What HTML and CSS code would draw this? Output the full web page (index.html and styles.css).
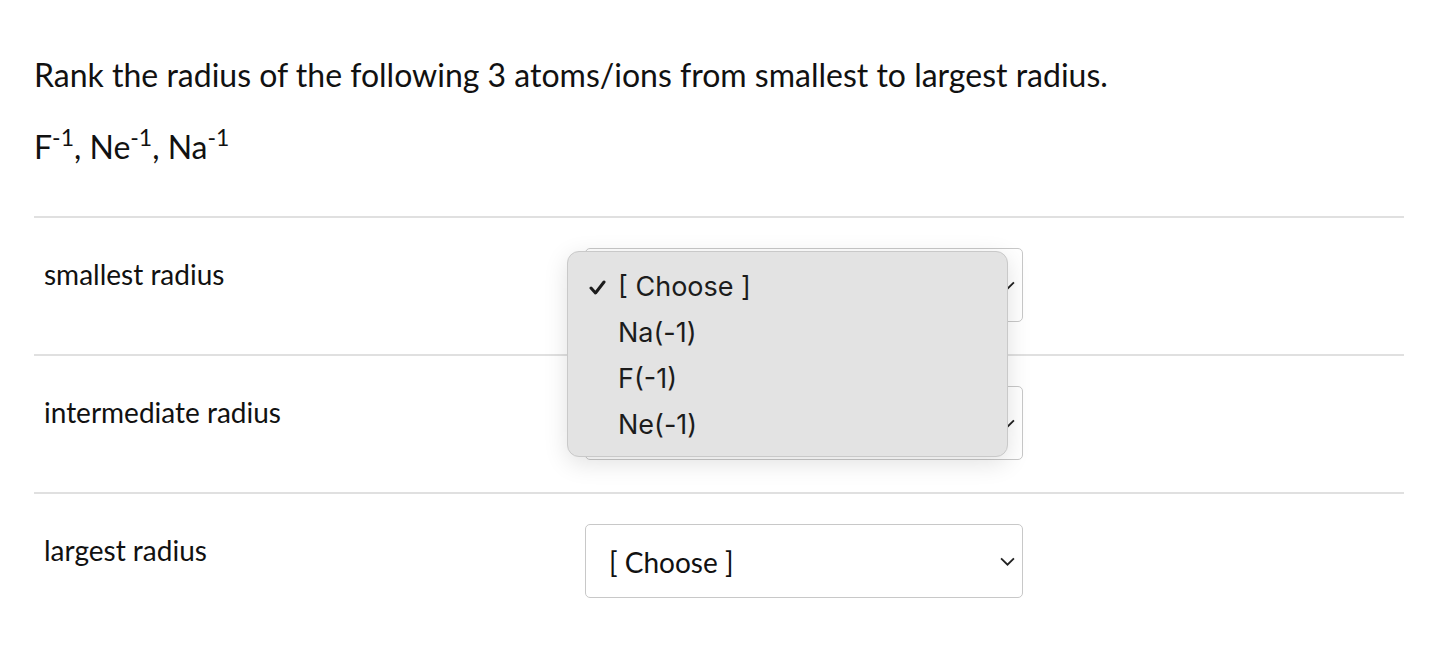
FILE: index.html
```html
<!DOCTYPE html>
<html>
<head>
<meta charset="utf-8">
<link rel="stylesheet" href="styles.css">
</head>
<body>
<div class="page">
  <p class="question">Rank the radius of the following 3 atoms/ions from smallest to largest radius.</p>
  <p class="ions">F<sup>-1</sup>, Ne<sup>-1</sup>, Na<sup>-1</sup></p>
  <div class="rows">
    <div class="row">
      <div class="label">smallest radius</div>
      <div class="select"><span>[ Choose ]</span><svg class="chev" viewBox="0 0 14 8" width="15" height="9"><path d="M1 1 L7 7 L13 1" fill="none" stroke="#222" stroke-width="1.7"/></svg></div>
    </div>
    <div class="row">
      <div class="label">intermediate radius</div>
      <div class="select"><span>[ Choose ]</span><svg class="chev" viewBox="0 0 14 8" width="15" height="9"><path d="M1 1 L7 7 L13 1" fill="none" stroke="#222" stroke-width="1.7"/></svg></div>
    </div>
    <div class="row">
      <div class="label">largest radius</div>
      <div class="select"><span>[ Choose ]</span><svg class="chev" viewBox="0 0 14 8" width="15" height="9"><path d="M1 1 L7 7 L13 1" fill="none" stroke="#222" stroke-width="1.7"/></svg></div>
    </div>
  </div>
  <div class="menu">
    <div class="item"><svg class="check" viewBox="0 0 17 15" width="17" height="15"><path d="M2 8 L6.5 13 L15 2" fill="none" stroke="#1c1c1c" stroke-width="3" stroke-linecap="round" stroke-linejoin="round"/></svg>[ Choose ]</div>
    <div class="item">Na(-1)</div>
    <div class="item">F(-1)</div>
    <div class="item">Ne(-1)</div>
  </div>
</div>
</body>
</html>
```
FILE: styles.css
```css
html, body {
  margin: 0;
  padding: 0;
  background: #fff;
}
.page {
  position: relative;
  padding: 50px 28px 0 34px;
  font-family: Lato, "Liberation Sans", sans-serif;
  color: #111;
}
.question {
  margin: 0;
  font-size: 32px;
  line-height: 50px;
}
.ions {
  margin: 22px 0 0 0;
  font-size: 32px;
  line-height: 50px;
}
.ions sup {
  font-size: 23px;
  line-height: 0;
  vertical-align: 13px;
}
.rows {
  margin-top: 44px;
}
.row {
  display: grid;
  grid-template-columns: 551px 438px;
  border-top: 2px solid #e0e0e0;
  height: 136px;
}
.label {
  padding: 41px 0 0 10px;
  font-size: 28px;
  line-height: 30px;
}
.select {
  margin-top: 30px;
  height: 72px;
  border: 1px solid #c8c8c8;
  border-radius: 5px;
  display: flex;
  align-items: center;
  justify-content: space-between;
  padding: 0 7px 0 23px;
  font-size: 28px;
}
.select span {
  padding-top: 1px;
}
.chev {
  display: block;
}
.menu {
  position: absolute;
  left: 567px;
  top: 251px;
  width: 441px;
  height: 206px;
  background: #e3e3e3;
  border: 1px solid #c9c9c9;
  border-radius: 12px;
  box-shadow: 0 6px 24px rgba(0,0,0,0.12);
  padding-top: 12px;
  box-sizing: border-box;
  font-family: Inter, "Open Sans", sans-serif;
  font-size: 27px;
  color: #1c1c1c;
}
.item {
  height: 46px;
  line-height: 46px;
  padding-left: 50px;
  position: relative;
}
.check {
  position: absolute;
  left: 21px;
  top: 16px;
}
```
